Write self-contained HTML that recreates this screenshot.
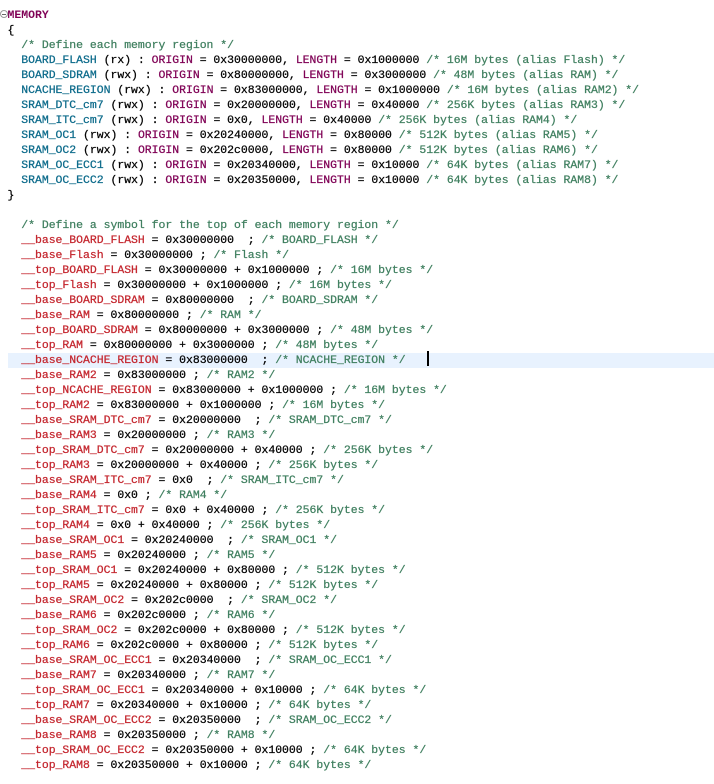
<!DOCTYPE html>
<html><head><meta charset="utf-8"><style>
html,body{margin:0;padding:0;background:#fff;width:714px;height:784px;overflow:hidden}
pre{margin:0;position:absolute;left:7.5px;top:8px;font-family:"Liberation Mono",monospace;font-size:11.45px;line-height:15px;color:#000;-webkit-text-stroke:0.25px}
.l{display:block;height:15px;white-space:pre}
.hl{background:#e8f2fe;width:707px}
.k{color:#7f0055}.i{color:#0b6a8a}.c{color:#3f7f5f}.s{color:#c4262e}
.b{font-weight:bold;-webkit-text-stroke:0}
.fold{position:absolute;left:0;top:10px;width:6px;height:6px;border:1px solid #999;border-radius:50%;font-size:0}
.fold:after{content:"";position:absolute;left:1px;top:2.5px;width:4px;height:1px;background:#666}
.cur{position:absolute;left:427px;top:351px;width:2px;height:15px;background:#000}
</style></head><body>
<div class="fold"></div>
<pre><span class="l"><span class="k b">MEMORY</span></span><span class="l">{</span><span class="l">  <span class="c">/* Define each memory region */</span></span><span class="l">  <span class="i">BOARD_FLASH</span> (rx) : <span class="k">ORIGIN</span> = 0x30000000, <span class="k">LENGTH</span> = 0x1000000 <span class="c">/* 16M bytes (alias Flash) */</span></span><span class="l">  <span class="i">BOARD_SDRAM</span> (rwx) : <span class="k">ORIGIN</span> = 0x80000000, <span class="k">LENGTH</span> = 0x3000000 <span class="c">/* 48M bytes (alias RAM) */</span></span><span class="l">  <span class="i">NCACHE_REGION</span> (rwx) : <span class="k">ORIGIN</span> = 0x83000000, <span class="k">LENGTH</span> = 0x1000000 <span class="c">/* 16M bytes (alias RAM2) */</span></span><span class="l">  <span class="i">SRAM_DTC_cm7</span> (rwx) : <span class="k">ORIGIN</span> = 0x20000000, <span class="k">LENGTH</span> = 0x40000 <span class="c">/* 256K bytes (alias RAM3) */</span></span><span class="l">  <span class="i">SRAM_ITC_cm7</span> (rwx) : <span class="k">ORIGIN</span> = 0x0, <span class="k">LENGTH</span> = 0x40000 <span class="c">/* 256K bytes (alias RAM4) */</span></span><span class="l">  <span class="i">SRAM_OC1</span> (rwx) : <span class="k">ORIGIN</span> = 0x20240000, <span class="k">LENGTH</span> = 0x80000 <span class="c">/* 512K bytes (alias RAM5) */</span></span><span class="l">  <span class="i">SRAM_OC2</span> (rwx) : <span class="k">ORIGIN</span> = 0x202c0000, <span class="k">LENGTH</span> = 0x80000 <span class="c">/* 512K bytes (alias RAM6) */</span></span><span class="l">  <span class="i">SRAM_OC_ECC1</span> (rwx) : <span class="k">ORIGIN</span> = 0x20340000, <span class="k">LENGTH</span> = 0x10000 <span class="c">/* 64K bytes (alias RAM7) */</span></span><span class="l">  <span class="i">SRAM_OC_ECC2</span> (rwx) : <span class="k">ORIGIN</span> = 0x20350000, <span class="k">LENGTH</span> = 0x10000 <span class="c">/* 64K bytes (alias RAM8) */</span></span><span class="l">}</span><span class="l"> </span><span class="l">  <span class="c">/* Define a symbol for the top of each memory region */</span></span><span class="l">  <span class="s">__base_BOARD_FLASH</span> = 0x30000000  ; <span class="c">/* BOARD_FLASH */</span></span><span class="l">  <span class="s">__base_Flash</span> = 0x30000000 ; <span class="c">/* Flash */</span></span><span class="l">  <span class="s">__top_BOARD_FLASH</span> = 0x30000000 + 0x1000000 ; <span class="c">/* 16M bytes */</span></span><span class="l">  <span class="s">__top_Flash</span> = 0x30000000 + 0x1000000 ; <span class="c">/* 16M bytes */</span></span><span class="l">  <span class="s">__base_BOARD_SDRAM</span> = 0x80000000  ; <span class="c">/* BOARD_SDRAM */</span></span><span class="l">  <span class="s">__base_RAM</span> = 0x80000000 ; <span class="c">/* RAM */</span></span><span class="l">  <span class="s">__top_BOARD_SDRAM</span> = 0x80000000 + 0x3000000 ; <span class="c">/* 48M bytes */</span></span><span class="l">  <span class="s">__top_RAM</span> = 0x80000000 + 0x3000000 ; <span class="c">/* 48M bytes */</span></span><span class="l hl">  <span class="s">__base_NCACHE_REGION</span> = 0x83000000  ; <span class="c">/* NCACHE_REGION */</span></span><span class="l">  <span class="s">__base_RAM2</span> = 0x83000000 ; <span class="c">/* RAM2 */</span></span><span class="l">  <span class="s">__top_NCACHE_REGION</span> = 0x83000000 + 0x1000000 ; <span class="c">/* 16M bytes */</span></span><span class="l">  <span class="s">__top_RAM2</span> = 0x83000000 + 0x1000000 ; <span class="c">/* 16M bytes */</span></span><span class="l">  <span class="s">__base_SRAM_DTC_cm7</span> = 0x20000000  ; <span class="c">/* SRAM_DTC_cm7 */</span></span><span class="l">  <span class="s">__base_RAM3</span> = 0x20000000 ; <span class="c">/* RAM3 */</span></span><span class="l">  <span class="s">__top_SRAM_DTC_cm7</span> = 0x20000000 + 0x40000 ; <span class="c">/* 256K bytes */</span></span><span class="l">  <span class="s">__top_RAM3</span> = 0x20000000 + 0x40000 ; <span class="c">/* 256K bytes */</span></span><span class="l">  <span class="s">__base_SRAM_ITC_cm7</span> = 0x0  ; <span class="c">/* SRAM_ITC_cm7 */</span></span><span class="l">  <span class="s">__base_RAM4</span> = 0x0 ; <span class="c">/* RAM4 */</span></span><span class="l">  <span class="s">__top_SRAM_ITC_cm7</span> = 0x0 + 0x40000 ; <span class="c">/* 256K bytes */</span></span><span class="l">  <span class="s">__top_RAM4</span> = 0x0 + 0x40000 ; <span class="c">/* 256K bytes */</span></span><span class="l">  <span class="s">__base_SRAM_OC1</span> = 0x20240000  ; <span class="c">/* SRAM_OC1 */</span></span><span class="l">  <span class="s">__base_RAM5</span> = 0x20240000 ; <span class="c">/* RAM5 */</span></span><span class="l">  <span class="s">__top_SRAM_OC1</span> = 0x20240000 + 0x80000 ; <span class="c">/* 512K bytes */</span></span><span class="l">  <span class="s">__top_RAM5</span> = 0x20240000 + 0x80000 ; <span class="c">/* 512K bytes */</span></span><span class="l">  <span class="s">__base_SRAM_OC2</span> = 0x202c0000  ; <span class="c">/* SRAM_OC2 */</span></span><span class="l">  <span class="s">__base_RAM6</span> = 0x202c0000 ; <span class="c">/* RAM6 */</span></span><span class="l">  <span class="s">__top_SRAM_OC2</span> = 0x202c0000 + 0x80000 ; <span class="c">/* 512K bytes */</span></span><span class="l">  <span class="s">__top_RAM6</span> = 0x202c0000 + 0x80000 ; <span class="c">/* 512K bytes */</span></span><span class="l">  <span class="s">__base_SRAM_OC_ECC1</span> = 0x20340000  ; <span class="c">/* SRAM_OC_ECC1 */</span></span><span class="l">  <span class="s">__base_RAM7</span> = 0x20340000 ; <span class="c">/* RAM7 */</span></span><span class="l">  <span class="s">__top_SRAM_OC_ECC1</span> = 0x20340000 + 0x10000 ; <span class="c">/* 64K bytes */</span></span><span class="l">  <span class="s">__top_RAM7</span> = 0x20340000 + 0x10000 ; <span class="c">/* 64K bytes */</span></span><span class="l">  <span class="s">__base_SRAM_OC_ECC2</span> = 0x20350000  ; <span class="c">/* SRAM_OC_ECC2 */</span></span><span class="l">  <span class="s">__base_RAM8</span> = 0x20350000 ; <span class="c">/* RAM8 */</span></span><span class="l">  <span class="s">__top_SRAM_OC_ECC2</span> = 0x20350000 + 0x10000 ; <span class="c">/* 64K bytes */</span></span><span class="l">  <span class="s">__top_RAM8</span> = 0x20350000 + 0x10000 ; <span class="c">/* 64K bytes */</span></span></pre>
<div class="cur"></div>
</body></html>
